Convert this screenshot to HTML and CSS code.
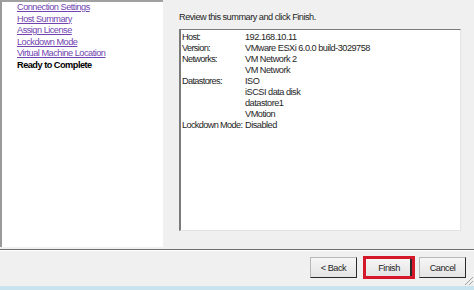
FILE: index.html
```html
<!DOCTYPE html>
<html lang="en">
<head>
    <meta charset="UTF-8">
    <title>Add Host - Ready to Complete</title>
    <link rel="stylesheet" href="styles.css">
</head>
<body>

<div class="wizard">
  <div class="main">
    <div class="steps">
      <a href="#" class="step">Connection Settings</a>
      <a href="#" class="step">Host Summary</a>
      <a href="#" class="step">Assign License</a>
      <a href="#" class="step">Lockdown Mode</a>
      <a href="#" class="step">Virtual Machine Location</a>
      <span class="step current">Ready to Complete</span>
    </div>

    <div class="content">
      <p class="intro">Review this summary and click Finish.</p>
      <div class="summary">
        <div class="row"><span class="label">Host:</span><span>192.168.10.11</span></div>
        <div class="row"><span class="label">Version:</span><span>VMware ESXi 6.0.0 build-3029758</span></div>
        <div class="row"><span class="label">Networks:</span><span>VM Network 2<br>VM Network</span></div>
        <div class="row"><span class="label">Datastores:</span><span>ISO<br>iSCSI data disk<br>datastore1<br>VMotion</span></div>
        <div class="row"><span class="label">Lockdown Mode:</span><span>Disabled</span></div>
      </div>
    </div>
  </div>

  <div class="footer">
    <button class="btn">&lt; Back</button>
    <button class="btn finish">Finish</button>
    <button class="btn">Cancel</button>
    <span class="grip"></span>
  </div>
  <div class="taskbar"></div>
</div>

</body>
</html>
```

FILE: styles.css
```css
body {
    margin: 0;
    padding: 0;
    font-family: "Liberation Sans", Arial, sans-serif;
    font-size: 9.2px;
    letter-spacing: -0.5px;
    color: #1e1e1e;
    background-color: #f0f0f0;
}

.wizard {
    width: 474px;
    height: 290px;
    display: flex;
    flex-direction: column;
    overflow: hidden;
}

.main {
    display: flex;
    height: 250px;
    border-bottom: 1px solid #6d6d6d;
    box-shadow: 0 1px 0 #ffffff;
}

.steps {
    width: 163px;
    box-sizing: border-box;
    background-color: #fff;
    border-top: 2px solid #a0a0a0;
    border-left: 2px solid #9a9a9a;
    padding: 0 0 0 15px;
    display: flex;
    flex-direction: column;
    margin-bottom: 2px;
}

.step {
    line-height: 11.5px;
    color: #7043b0;
    text-decoration: underline;
}

.step.current {
    color: #000;
    font-weight: bold;
    text-decoration: none;
}

.content {
    flex: 1;
    padding: 12px 13px 0 16px;
}

.intro {
    margin: 0 0 6px 0;
    line-height: 11px;
}

.summary {
    height: 196px;
    background-color: #fff;
    border-top: 1px solid #7a7a7a;
    border-left: 2px solid #7a7a7a;
    border-right: 1px solid #e3e3e3;
    border-bottom: 1px solid #e3e3e3;
    padding: 2px 1px;
}

.row {
    display: flex;
    line-height: 11px;
}

.label {
    width: 63px;
    flex: none;
    white-space: nowrap;
    letter-spacing: -0.65px;
}

.footer {
    position: relative;
    height: 34px;
    display: flex;
    align-items: flex-start;
    justify-content: flex-end;
    gap: 4px;
    padding: 5px 8px 0 0;
    box-sizing: border-box;
    margin-top: 2px;
}

.btn {
    font-family: inherit;
    font-size: 9.2px;
    letter-spacing: -0.5px;
    color: #1e1e1e;
    width: 47px;
    height: 21px;
    padding: 0;
    background: linear-gradient(#f6f6f6, #e4e4e4);
    border: 1px solid #b8b8b8;
    border-right-color: #2a2a2a;
    border-bottom-color: #2a2a2a;
    border-radius: 0;
}

.btn.finish {
    width: 52px;
    height: 23px;
    margin: -1px 0 0 2px;
    border: 3px solid #d4182a;
    box-shadow: inset -2px 0 0 #2a2a2a;
}

.grip {
    position: absolute;
    right: 1px;
    bottom: 1px;
    width: 8px;
    height: 8px;
    background: linear-gradient(135deg, transparent 45%, #a0a0a0 45%, #a0a0a0 55%, transparent 55%, transparent 70%, #a0a0a0 70%, #a0a0a0 80%, transparent 80%);
}

.taskbar {
    height: 4px;
    background-color: #c8e2ee;
}
```
